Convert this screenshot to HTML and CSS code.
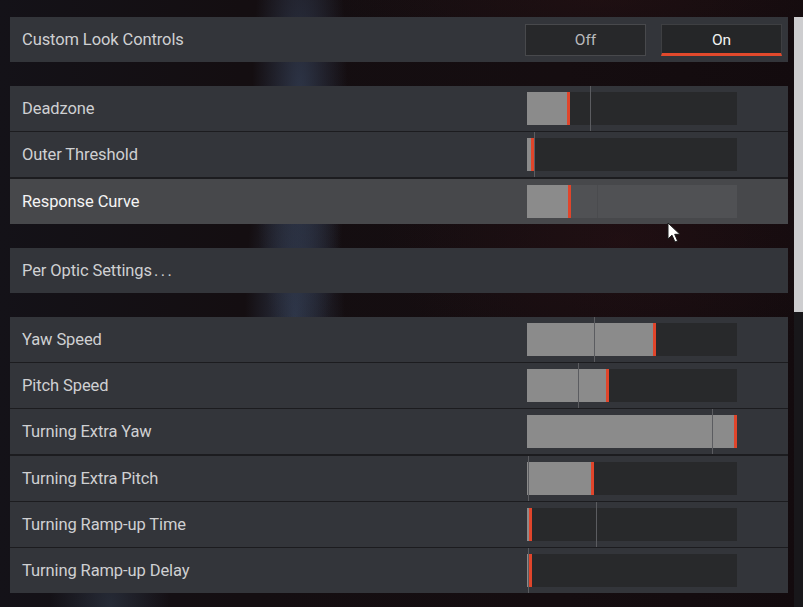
FILE: index.html
```html
<!DOCTYPE html>
<html>
<head>
<meta charset="utf-8">
<link rel="stylesheet" href="styles.css">
</head>
<body>
<div class="screen">
  <main class="panel">
    <section class="group">
      <div class="row">
        <span class="label">Custom Look Controls</span>
        <div class="toggle">
          <button class="opt">Off</button>
          <button class="opt active">On</button>
        </div>
      </div>
    </section>

    <section class="group">
      <div class="row slider-row">
        <span class="label">Deadzone</span>
        <div class="slider"><div class="track"><div class="fill" style="width:20.5%"></div></div><div class="default" style="left:30%"></div></div>
      </div>
      <div class="row slider-row">
        <span class="label">Outer Threshold</span>
        <div class="slider"><div class="track"><div class="fill" style="width:3.4%"></div></div><div class="default" style="left:3.2%"></div></div>
      </div>
      <div class="row slider-row focused">
        <span class="label">Response Curve</span>
        <div class="slider"><div class="track"><div class="fill" style="width:21%"></div></div><div class="default inset" style="left:33.5%"></div></div>
      </div>
    </section>

    <section class="group">
      <div class="row">
        <span class="label">Per Optic Settings<span class="dots">...</span></span>
      </div>
    </section>

    <section class="group">
      <div class="row slider-row">
        <span class="label">Yaw Speed</span>
        <div class="slider"><div class="track"><div class="fill" style="width:61.3%"></div></div><div class="default" style="left:32%"></div></div>
      </div>
      <div class="row slider-row">
        <span class="label">Pitch Speed</span>
        <div class="slider"><div class="track"><div class="fill" style="width:39%"></div></div><div class="default" style="left:24.3%"></div></div>
      </div>
      <div class="row slider-row">
        <span class="label">Turning Extra Yaw</span>
        <div class="slider"><div class="track"><div class="fill" style="width:100%"></div></div><div class="default" style="left:88%"></div></div>
      </div>
      <div class="row slider-row">
        <span class="label">Turning Extra Pitch</span>
        <div class="slider"><div class="track"><div class="fill" style="width:32%"></div></div><div class="default" style="left:0.3%"></div></div>
      </div>
      <div class="row slider-row">
        <span class="label">Turning Ramp-up Time</span>
        <div class="slider"><div class="track"><div class="fill" style="width:2.4%"></div></div><div class="default" style="left:33%"></div></div>
      </div>
      <div class="row slider-row">
        <span class="label">Turning Ramp-up Delay</span>
        <div class="slider"><div class="track"><div class="fill" style="width:2.4%"></div></div><div class="default" style="left:0.3%"></div></div>
      </div>
    </section>
  </main>

  <div class="scrollbar">
    <div class="thumb"></div>
    <div class="rail"></div>
  </div>

  <svg class="cursor" width="14" height="22" viewBox="0 0 14 22">
    <path d="M1 1 L1 17 L5 13.2 L8 20 L10.6 18.9 L7.7 12.3 L13 12.3 Z" fill="#ffffff" stroke="#1a1a1a" stroke-width="1" stroke-linejoin="round"/>
  </svg>
</div>
</body>
</html>
```

FILE: styles.css
```css
html, body {
  margin: 0;
  padding: 0;
  width: 803px;
  height: 607px;
  overflow: hidden;
}

body {
  font-family: Roboto, "Liberation Sans", sans-serif;
  background-color: #130d0f;
  background-image:
    radial-gradient(ellipse 48px 260px at 300px 110px, rgba(55,68,92,0.75), rgba(55,68,92,0) 100%),
    radial-gradient(ellipse 50px 220px at 295px 320px, rgba(55,68,92,0.7), rgba(55,68,92,0) 100%),
    radial-gradient(ellipse 60px 120px at 110px 607px, rgba(60,75,95,0.45), rgba(60,75,95,0) 100%),
    radial-gradient(ellipse 240px 140px at 620px 240px, rgba(45,18,22,0.45), rgba(45,18,22,0) 100%),
    radial-gradient(ellipse 260px 60px at 600px 0px, rgba(40,18,20,0.5), rgba(40,18,20,0) 100%),
    linear-gradient(90deg, #141218 0%, #140e11 30%, #150d10 70%, #130b0e 100%);
}

.screen {
  position: relative;
  display: flex;
  height: 607px;
  box-sizing: border-box;
  padding-top: 17px;
}

.panel {
  margin-left: 10px;
  width: 778px;
  display: flex;
  flex-direction: column;
  gap: 24px;
}

.group {
  display: flex;
  flex-direction: column;
  gap: 1.33px;
  background: #1c1c1f;
}

.row {
  height: 45px;
  box-sizing: border-box;
  display: flex;
  align-items: center;
  justify-content: space-between;
  padding-left: 12px;
  padding-right: 6px;
  background: rgba(53, 55, 59, 0.97);
}

.slider-row {
  padding-right: 51px;
}

.row.focused {
  background: #47484b;
}

.label {
  font-size: 16.5px;
  color: #cfd0d2;
  letter-spacing: -0.1px;
  white-space: nowrap;
}

.focused .label {
  color: #f4f4f4;
}

.dots {
  letter-spacing: 2.4px;
  margin-left: 2px;
}

.toggle {
  display: flex;
  gap: 15px;
}

.opt {
  width: 121px;
  height: 32px;
  box-sizing: border-box;
  font-family: Roboto, "Liberation Sans", sans-serif;
  font-size: 15.5px;
  color: #b9babc;
  background: #27282a;
  border: 1px solid #48494c;
  padding: 0;
  margin: 0;
}

.opt.active {
  color: #f2f2f2;
  background: #252628;
  border-color: #3e3f42;
  border-bottom: 3px solid #e2492c;
  padding-top: 2px;
}

.slider {
  position: relative;
  width: 210px;
  height: 45px;
  display: flex;
  align-items: center;
}

.track {
  width: 100%;
  height: 33px;
  background: #28292b;
  display: flex;
}

.focused .track {
  background: #505154;
}

.fill {
  height: 100%;
  box-sizing: border-box;
  background: #8b8b8b;
  border-right: 3px solid #e0452b;
}

.default {
  position: absolute;
  top: 0;
  bottom: 0;
  width: 1px;
  background: #5b5c60;
}

.default.inset {
  top: 6px;
  bottom: 6px;
  background: #4a4b4e;
}

.scrollbar {
  margin-left: 6px;
  width: 9px;
  display: flex;
  flex-direction: column;
}

.thumb {
  height: 295px;
  background: #cdcdcf;
}

.rail {
  flex: 1;
  background: #18171a;
}

.cursor {
  position: absolute;
  left: 667px;
  top: 222px;
}
```
